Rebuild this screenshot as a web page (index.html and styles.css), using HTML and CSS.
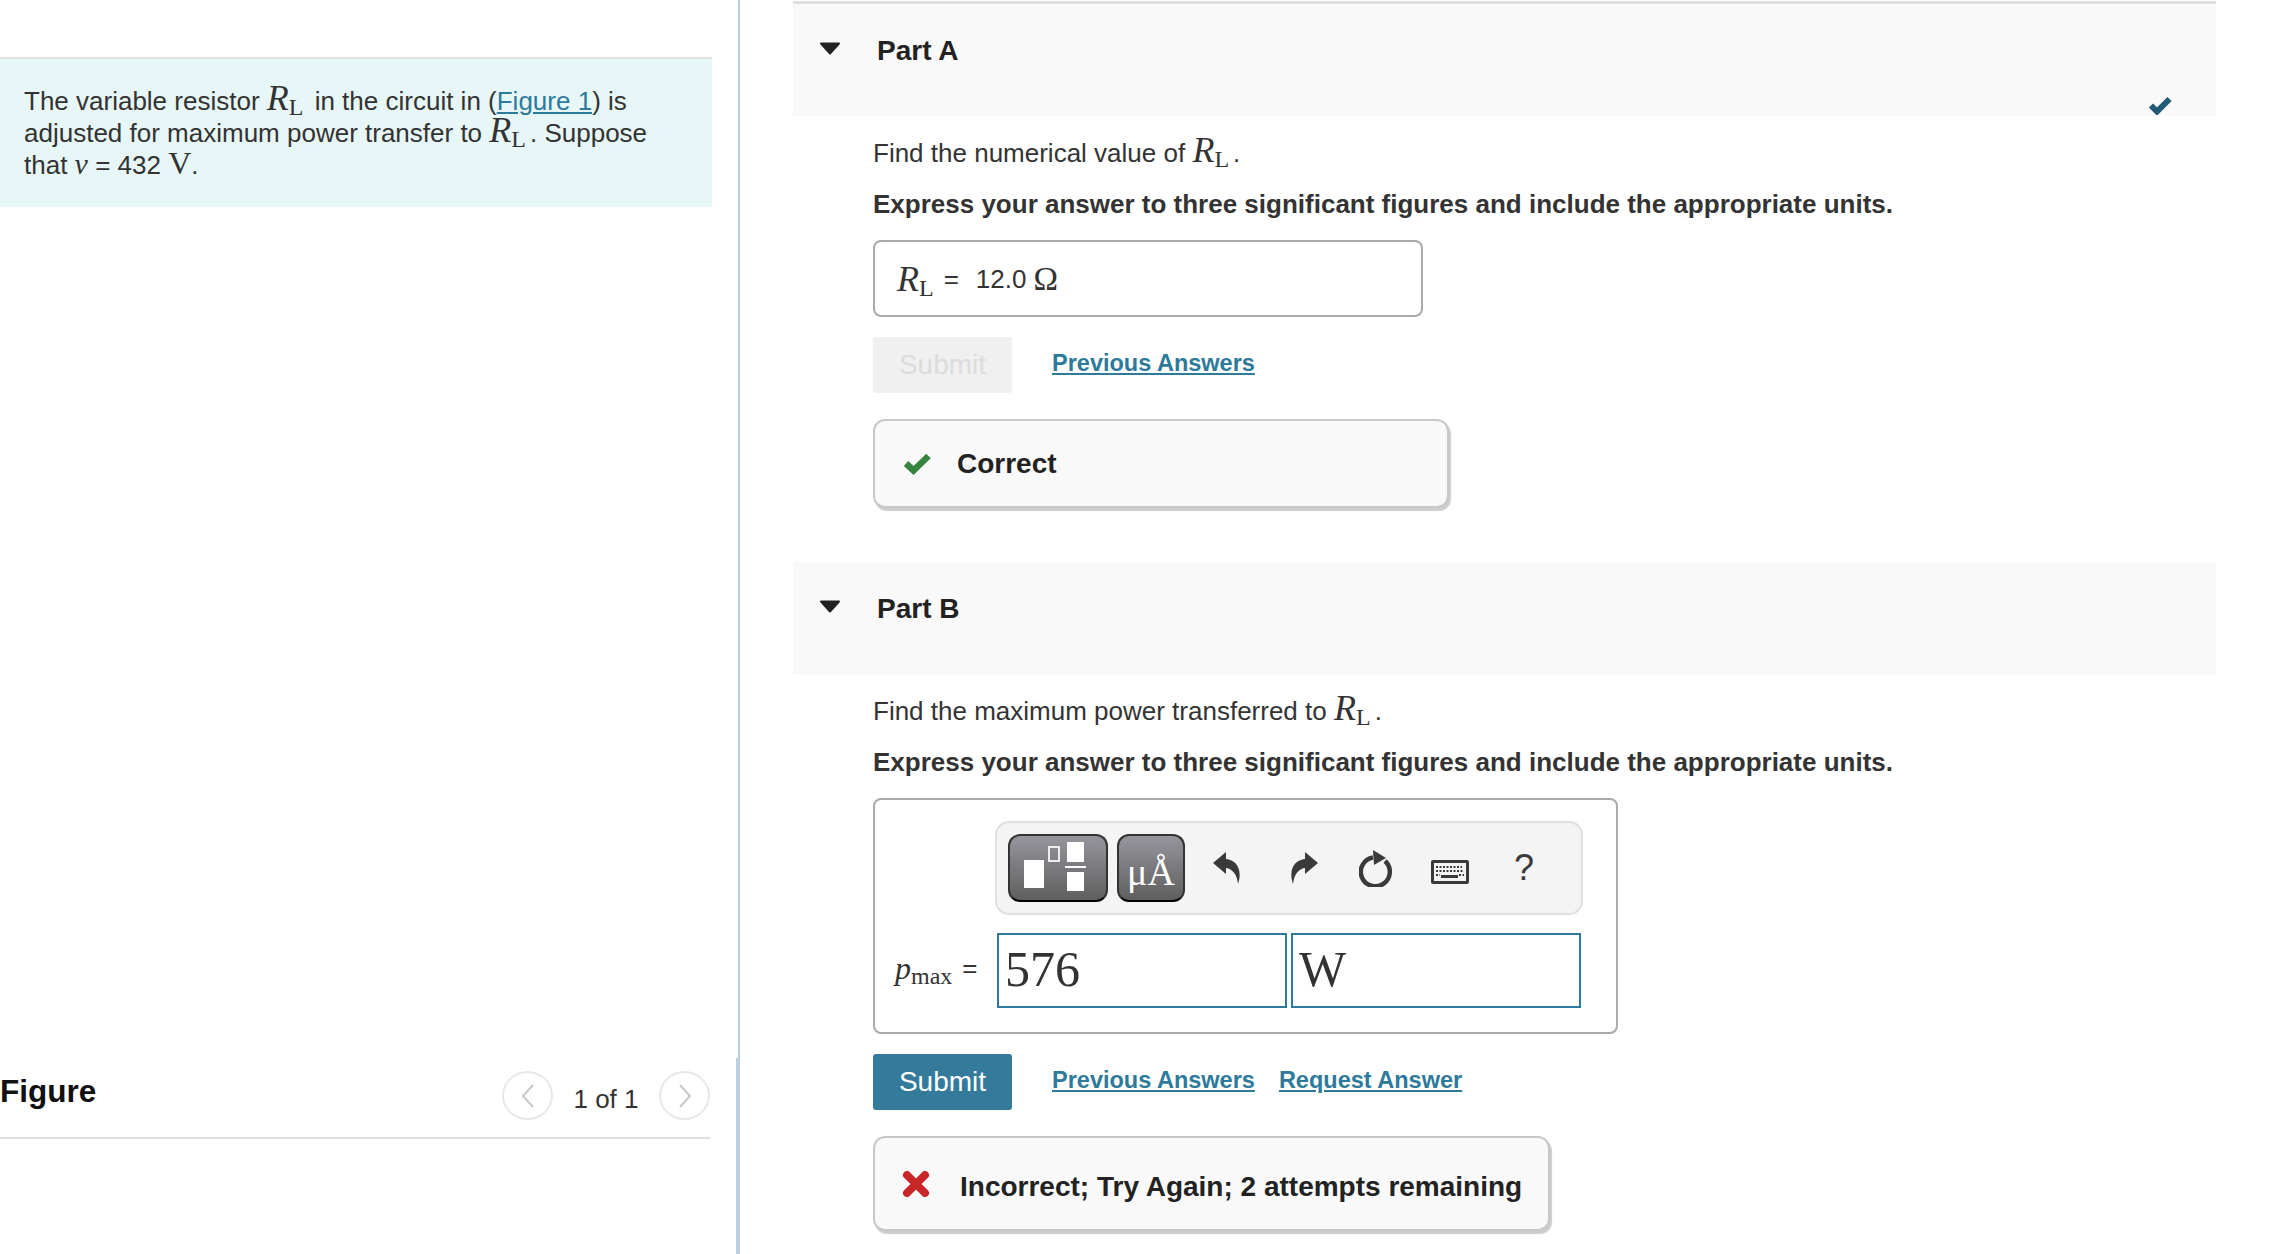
FILE: index.html
```html
<!DOCTYPE html>
<html lang="en">
<head>
<meta charset="utf-8">
<title>Part A and Part B</title>
<link rel="stylesheet" href="styles.css">
</head>
<body>
<div class="page">
  <aside class="left">
    <div class="upper">
      <div class="intro">The variable resistor <span class="m"><i>R</i><sub>L</sub></span> in the circuit in (<a href="#">Figure 1</a>) is<br>adjusted for maximum power transfer to <span class="m"><i>R</i><sub>L</sub></span>. Suppose<br>that <span class="m v"><i>v</i></span> = 432 <span class="m u">V</span>.</div>
    </div>
    <div class="lower">
      <div class="fig-head">
        <h2 class="fig-title">Figure</h2>
        <div class="pager">
          <span class="circle"><svg width="14" height="26" viewBox="0 0 14 26"><path d="M12 2 L2 13 L12 24" fill="none" stroke="#c8c8c8" stroke-width="2"/></svg></span>
          <span class="pager-text">1 of 1</span>
          <span class="circle"><svg width="14" height="26" viewBox="0 0 14 26"><path d="M2 2 L12 13 L2 24" fill="none" stroke="#c8c8c8" stroke-width="2"/></svg></span>
        </div>
      </div>
    </div>
  </aside>
  <main class="right">
    <section class="part">
      <header class="part-head">
        <svg class="caret" width="22" height="13" viewBox="0 0 22 13"><path d="M2 1.500H20L11 11.500Z" fill="#222" stroke="#222" stroke-width="2" stroke-linejoin="round"/></svg>
        <h3 class="part-title">Part A</h3>
        <svg class="done" width="24" height="19" viewBox="0 0 24 19"><path d="M3 9.500 L9 15.500 L21.500 3" fill="none" stroke="#215a74" stroke-width="6"/></svg>
      </header>
      <div class="body">
        <p class="q">Find the numerical value of <span class="m"><i>R</i><sub>L</sub></span>.</p>
        <p class="q strong">Express your answer to three significant figures and include the appropriate units.</p>
        <div class="answer"><span class="m"><i>R</i><sub>L</sub></span><span class="eq">=</span><span>12.0</span><span class="m omega">Ω</span></div>
        <div class="actions">
          <button class="btn off">Submit</button>
          <a class="link" href="#">Previous Answers</a>
        </div>
        <div class="fb fb-ok">
          <svg width="28" height="22" viewBox="0 0 28 22"><path d="M3 10.500 L10.500 17.500 L25.500 3" fill="none" stroke="#36843f" stroke-width="6.500"/></svg>
          <span>Correct</span>
        </div>
      </div>
    </section>
    <section class="part part-b">
      <header class="part-head">
        <svg class="caret" width="22" height="13" viewBox="0 0 22 13"><path d="M2 1.500H20L11 11.500Z" fill="#222" stroke="#222" stroke-width="2" stroke-linejoin="round"/></svg>
        <h3 class="part-title">Part B</h3>
      </header>
      <div class="body">
        <p class="q">Find the maximum power transferred to <span class="m"><i>R</i><sub>L</sub></span>.</p>
        <p class="q strong">Express your answer to three significant figures and include the appropriate units.</p>
        <div class="editor">
          <div class="toolbar">
            <div class="tool t-wide">
              <svg width="96" height="64" viewBox="0 0 96 64">
                <rect x="14" y="24" width="20" height="28" fill="#fff"/>
                <rect x="39" y="11" width="10" height="14" fill="none" stroke="#eee" stroke-width="2"/>
                <rect x="57" y="6" width="17" height="20" fill="#fff"/>
                <rect x="55" y="30" width="21" height="2" fill="#fff"/>
                <rect x="57" y="36" width="17" height="19" fill="#fff"/>
              </svg>
            </div>
            <div class="tool t-unit"><span class="mu">μÅ</span></div>
            <svg class="ic i1" width="28" height="32" viewBox="0 0 28 32"><path d="M0 11 L13 0 V7 C23 8 30 17 25 32 C24 23 20 17 13 16 V22 Z" fill="#3a3a3a"/></svg>
            <svg class="ic i2" width="28" height="32" viewBox="0 0 28 32"><path d="M28 11 L15 0 V7 C5 8 -2 17 3 32 C4 23 8 17 15 16 V22 Z" fill="#3a3a3a"/></svg>
            <svg class="ic i3" width="33" height="37" viewBox="0 0 33 37"><path d="M14 7.500 A14.500 14.500 0 1 0 26 11" fill="none" stroke="#3a3a3a" stroke-width="4.500"/><path d="M14 0 L27 8 L15 15 Z" fill="#3a3a3a"/></svg>
            <svg class="ic i4" width="38" height="24" viewBox="0 0 38 24"><rect width="38" height="24" rx="2" fill="#3a3a3a"/><rect x="3" y="3" width="32" height="18" fill="#f4f4f4"/><path d="M5 7H31M5 11H33M5 15H9M28 15H33" stroke="#3a3a3a" stroke-width="2" stroke-dasharray="2 1.500" fill="none"/><rect x="10" y="15" width="17" height="3" fill="#3a3a3a"/></svg>
            <span class="help">?</span>
          </div>
          <div class="entry">
            <span class="entry-label"><span class="m"><i>p</i><sub>max</sub></span><span class="eq">=</span></span>
            <div class="field">576</div>
            <div class="field">W</div>
          </div>
        </div>
        <div class="actions">
          <button class="btn">Submit</button>
          <a class="link" href="#">Previous Answers</a>
          <a class="link" href="#">Request Answer</a>
        </div>
        <div class="fb fb-bad">
          <svg width="28" height="26" viewBox="0 0 28 26"><path d="M5 4 L23 22 M23 4 L5 22" stroke="#c9262a" stroke-width="8" stroke-linecap="round"/></svg>
          <span class="fb-text">Incorrect; Try Again; 2 attempts remaining</span>
        </div>
      </div>
    </section>
  </main>
</div>
</body>
</html>
```

FILE: styles.css
```css
* { box-sizing: border-box; }
html, body { margin: 0; height: 100%; overflow: hidden; background: #fff; }
body { font-family: "Liberation Sans", Arial, sans-serif; font-size: 26px; color: #333; line-height: 32px; }
a { color: #2e7a9b; }
p, h2, h3 { margin: 0; }

.page { display: flex; height: 1254px; }
.left { width: 740px; display: flex; flex-direction: column; flex: none; }
.upper { flex: 1; padding-top: 57px; border-right: 2px solid #bccfe0; }
.intro { width: 712px; height: 150px; background: #e7f6f6; border-top: 2px solid #e0e0e0; padding: 26px 24px 0; white-space: nowrap; }
.lower { height: 196px; border-right: 4px solid #bccfe0; padding-top: 13px; }
.fig-head { width: 710px; height: 68px; display: flex; justify-content: space-between; border-bottom: 2px solid #dedede; }
.fig-title { font-size: 31.500px; line-height: 40px; font-weight: 700; color: #111; }
.pager { display: flex; align-items: flex-start; }
.circle { width: 51px; height: 49px; border: 2px solid #e8e8e8; border-radius: 50%; display: flex; align-items: center; justify-content: center; }
.pager-text { width: 106px; text-align: center; line-height: 56px; white-space: nowrap; }

.m { font-family: "Liberation Serif", "Times New Roman", serif; font-size: 36px; line-height: 0; }
.m sub { font-size: 24px; line-height: 0; vertical-align: -5px; font-style: normal; margin-right: 4px; }
.v { font-size: 30px; }
.u { font-size: 32px; }

.right { margin-left: 53px; width: 1423px; padding-top: 1px; flex: none; }
.part-head { position: relative; height: 115px; background: #f9f9f9; border-top: 3px solid #e0e0e0; display: flex; align-items: flex-start; }
.part-b { margin-top: 54px; }
.part-b .part-head { border-top-color: #f9f9f9; height: 113px; }
.caret { margin: 38px 0 0 26px; flex: none; }
.part-title { margin: 29px 0 0 36px; font-size: 28px; line-height: 36px; font-weight: 700; color: #222; }
.part-b .caret { margin-top: 35px; }
.part-b .part-title { margin-top: 26px; }
.done { position: absolute; right: 44px; bottom: 1px; }

.body { padding: 21px 0 0 80px; }
.q { height: 32px; white-space: nowrap; }
.strong { margin-top: 19px; font-weight: 700; }
.answer { margin-top: 20px; width: 550px; height: 77px; border: 2px solid #aaa; border-radius: 8px; display: flex; align-items: center; padding-left: 22px; }
.answer .m { line-height: 40px; }
.answer sub { margin-right: 0; }
.eq { margin: 0 17px 0 10px; }
.answer .omega { margin-left: 7px; font-size: 33px; }
.actions { margin-top: 20px; display: flex; align-items: flex-start; }
.btn { width: 139px; height: 56px; border: 0; border-radius: 3px; background: #337a9b; color: #fff; font: 28px/56px "Liberation Sans", Arial, sans-serif; padding: 0; }
.btn.off { background: #f0f0f0; color: #dcdcdc; }
.link { margin: 10px 0 0 40px; font-weight: 700; font-size: 23.500px; line-height: 32px; white-space: nowrap; }
.link + .link { margin-left: 24px; }
.fb { margin-top: 26px; height: 89px; border: 2px solid #c8c8c8; border-radius: 12px; background: #f9f9f9; box-shadow: 2px 3px 1px #ccc; display: inline-flex; align-items: center; font-weight: 700; font-size: 28px; color: #222; white-space: nowrap; }
.fb-ok { width: 576px; padding-left: 28px; gap: 26px; }
.fb-bad { height: 95px; width: 677px; padding-left: 27px; gap: 30px; }
.fb-text { padding-top: 7px; }
.part-b .body { padding-top: 20px; }

.editor { margin-top: 20px; width: 745px; height: 236px; border: 2px solid #aaa; border-radius: 8px; padding-top: 21px; }
.toolbar { margin-left: 120px; width: 588px; height: 94px; border: 2px solid #e0e0e0; border-radius: 14px; background: #f4f4f4; display: flex; align-items: center; padding-left: 11px; }
.tool { height: 68px; border-radius: 12px; background: linear-gradient(#95959c, #5f5f5f); border: 2px solid #333; border-bottom-color: #000; display: flex; align-items: center; justify-content: center; flex: none; overflow: hidden; }
.t-wide { width: 100px; }
.t-unit { width: 68px; margin-left: 9px; }
.mu { font-family: "Liberation Serif", serif; font-size: 38px; color: #fff; line-height: 60px; white-space: nowrap; padding-top: 8px; }
.ic { flex: none; }
.i1 { margin-left: 28px; }
.i2 { margin-left: 49px; }
.i3 { margin-left: 41px; }
.i4 { margin-left: 39px; margin-top: 8px; }
.help { margin-left: 45px; font-size: 36px; line-height: 40px; color: #3a3a3a; }
.entry { margin-top: 18px; display: flex; gap: 4px; }
.entry-label { width: 118px; padding: 0 0 6px 20px; display: flex; align-items: center; white-space: nowrap; }
.entry-label .m { font-size: 32px; line-height: 40px; }
.entry-label sub { font-size: 24px; margin-right: 0; }
.entry-label .eq { margin: 0 0 0 10px; }
.field { width: 290px; height: 75px; border: 2px solid #2e7a9b; padding-left: 6px; font: 50px/68px "Liberation Serif", serif; color: #333; }
```
